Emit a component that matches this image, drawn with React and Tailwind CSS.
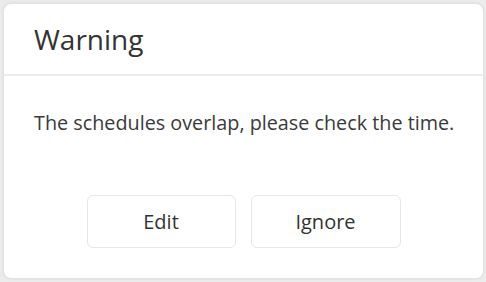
export default function App() {
  return (
    <div className="w-[486px] h-[282px] bg-[#ececec] p-[3px] pr-[2px] pb-[3px]" style={{ fontFamily: '"Open Sans", "Noto Sans", sans-serif' }}>
      <div className="w-[481px] h-[276px] bg-white border border-[#e3e3e3] rounded-[8px] flex flex-col shadow-[0_0_3px_rgba(0,0,0,0.08)]">
        <div className="h-[72px] flex items-center px-[30px] border-b-2 border-[#ededed]">
          <span className="text-[28px] text-[#333333] leading-none">Warning</span>
        </div>
        <div className="pt-[34px] px-[30px] text-[19.8px] leading-[26px] text-[#3a3a3a] whitespace-nowrap">
          The schedules overlap, please check the time.
        </div>
        <div className="mt-[59px] flex justify-center gap-[15px]">
          <button className="w-[149px] h-[53px] rounded-[6px] border border-[#e6e6e6] bg-white text-[20px] text-[#333333]">Edit</button>
          <button className="w-[150px] h-[53px] rounded-[6px] border border-[#e6e6e6] bg-white text-[20px] text-[#333333]">Ignore</button>
        </div>
      </div>
    </div>
  );
}
